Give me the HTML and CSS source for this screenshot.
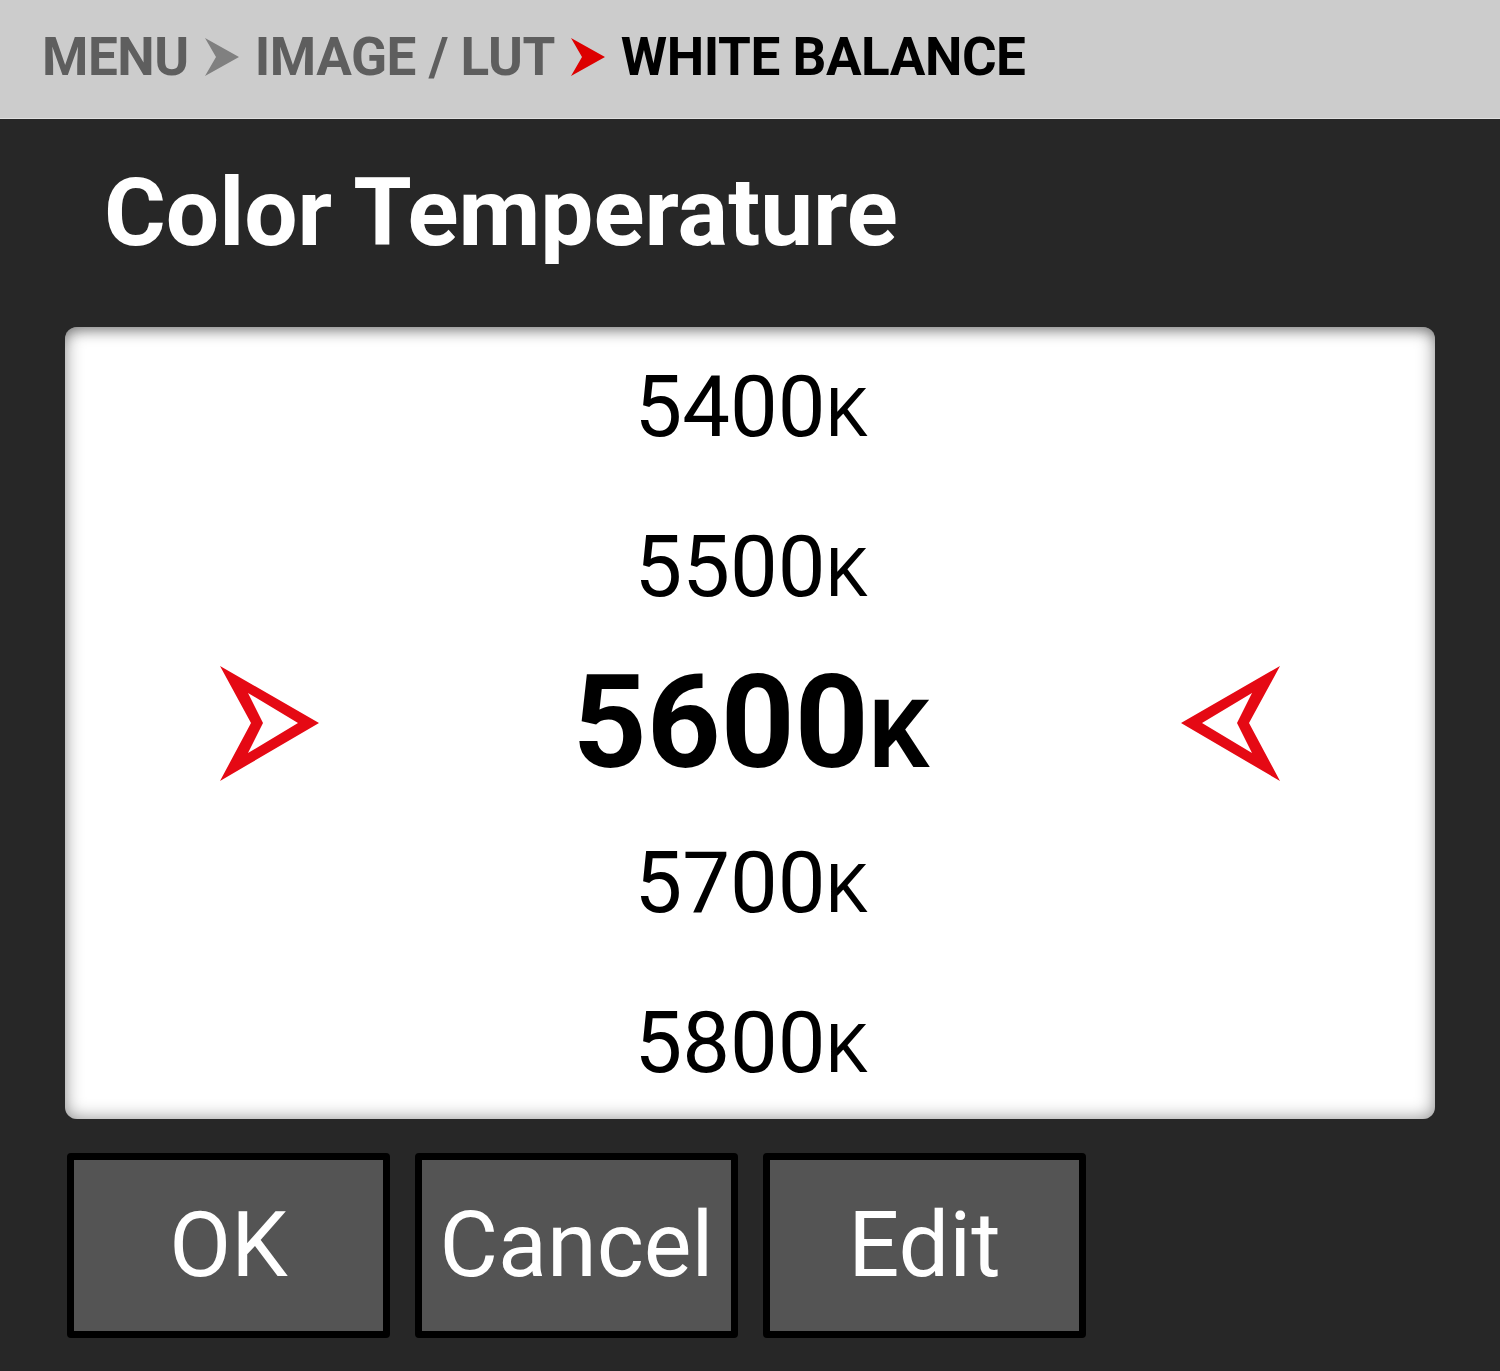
FILE: index.html
```html
<!DOCTYPE html>
<html lang="en">
<head>
  <meta charset="UTF-8" />
  <title>White Balance</title>
  <link rel="stylesheet" href="styles.css">
</head>
<body>

  <!-- Breadcrumb -->
  <div class="crumbs">
    <span class="crumb">MENU</span>
    <svg class="sep" viewBox="0 0 34 38"><path d="M0 0 L34 19 L0 38 L11 19 Z"/></svg>
    <span class="crumb">IMAGE / LUT</span>
    <svg class="sep red" viewBox="0 0 34 38"><path d="M0 0 L34 19 L0 38 L11 19 Z"/></svg>
    <span class="crumb current">WHITE BALANCE</span>
  </div>

  <h1 class="title">Color Temperature</h1>

  <!-- Picker -->
  <div class="wrap">
    <div class="picker">
      <svg class="arrow" viewBox="0 0 100 115"><path fill-rule="evenodd" d="M1 0 L100 57 L1 115 L32 57 Z M29 27 L44 57 L29 87 L79 57 Z"/></svg>
      <div class="values">
        <div class="val">5400<span class="k">K</span></div>
        <div class="val">5500<span class="k">K</span></div>
        <div class="val selected">5600<span class="k">K</span></div>
        <div class="val">5700<span class="k">K</span></div>
        <div class="val">5800<span class="k">K</span></div>
      </div>
      <svg class="arrow flip" viewBox="0 0 100 115"><path fill-rule="evenodd" d="M1 0 L100 57 L1 115 L32 57 Z M29 27 L44 57 L29 87 L79 57 Z"/></svg>
    </div>

    <div class="buttons">
      <button>OK</button>
      <button>Cancel</button>
      <button>Edit</button>
    </div>
  </div>

</body>
</html>
```

FILE: styles.css
```css
:root {
  --bg: #272727;
  --bar: #cccccc;
  --red: #e50914;
  --font: Roboto, 'Noto Sans', sans-serif;
}

* {
  margin: 0;
  padding: 0;
  box-sizing: border-box;
  font-family: var(--font);
}

body {
  background: var(--bg);
  width: 1500px;
  height: 1371px;
  overflow: hidden;
}

.crumbs {
  height: 119px;
  background: var(--bar);
  border-bottom: 1px solid #e0e0e0;
  display: flex;
  align-items: center;
  gap: 16px;
  padding: 0 0 4px 42px;
}

.crumb {
  font-size: 53px;
  font-weight: 700;
  color: #5e5e5e;
  letter-spacing: -0.45px;
}

.crumb.current {
  color: #000;
}

.sep {
  width: 34px;
  height: 38px;
  fill: #808080;
}

.sep.red {
  fill: #dd0000;
}

.title {
  color: #fff;
  font-size: 94.5px;
  font-weight: 700;
  height: 208px;
  line-height: 1;
  padding: 47px 0 0 104px;
}

.wrap {
  padding: 0 65px;
}

.picker {
  width: 1370px;
  height: 792px;
  background: #fff;
  border-radius: 12px;
  box-shadow: inset 0 0 18px rgba(0,0,0,0.45), inset 0 10px 12px -6px rgba(0,0,0,0.25);
  display: flex;
  align-items: center;
  justify-content: space-between;
  padding: 0 154px;
  overflow: hidden;
}

.arrow {
  width: 100px;
  height: 115px;
  fill: var(--red);
}

.arrow.flip {
  transform: scaleX(-1);
}

.values {
  align-self: flex-start;
  display: flex;
  flex-direction: column;
  align-items: center;
  margin-left: 2px;
}

.val {
  font-size: 85px;
  line-height: 160px;
  height: 160px;
  color: #000;
}

.k {
  font-size: 67px;
}

.val.selected {
  font-size: 129px;
  font-weight: 700;
  line-height: 152px;
  height: 156px;
}

.val.selected .k {
  font-size: 95px;
}

.buttons {
  display: flex;
  gap: 25px;
  margin-top: 34px;
  padding-left: 2px;
}

button {
  flex: none;
  width: 323px;
  height: 185px;
  background: #545454;
  border: 7px solid #000;
  border-radius: 4px;
  color: #fff;
  font-size: 90px;
  cursor: pointer;
}
```
